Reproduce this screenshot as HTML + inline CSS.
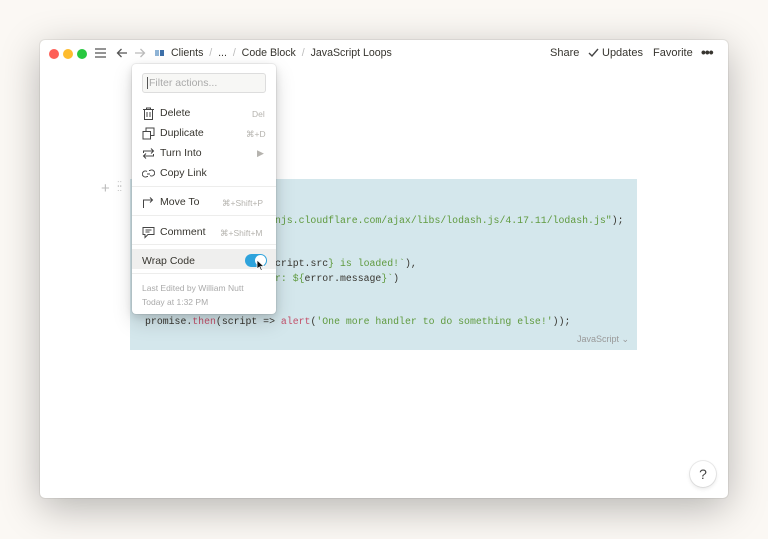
<!DOCTYPE html>
<html><head><meta charset="utf-8"><style>
*{margin:0;padding:0;box-sizing:border-box}
body{width:768px;height:539px;background:#fbf8f4;position:relative;overflow:hidden;font-family:"Liberation Sans",sans-serif;color:#37352f}
.win{position:absolute;left:40px;top:40px;width:688px;height:458px;background:#fff;border-radius:5px;box-shadow:0 10px 40px rgba(0,0,0,.28),0 0 0 1px rgba(0,0,0,.06)}
.dot{position:absolute;top:49px;width:10px;height:10px;border-radius:50%}
.t{position:absolute;font-size:11px;white-space:nowrap}
.code{position:absolute;left:130px;top:179px;width:507px;height:171px;background:#d4e7ec}
.code pre{position:absolute;left:15px;top:35px;font-family:"Liberation Mono",monospace;font-size:9.85px;line-height:14.4px;color:#37352f}
.s{color:#5f9a3e}.k{color:#c3506a}.p{color:#777}
.menu{position:absolute;left:132px;top:64px;width:144px;height:250px;background:#fff;border-radius:4px;box-shadow:0 0 0 1px rgba(15,15,15,.06),0 3px 8px rgba(15,15,15,.12),0 8px 20px rgba(15,15,15,.15)}
.menu .t{font-size:10.5px}
.sc{color:#b5b3ae;font-size:8.5px!important}
.sep{position:absolute;left:0;width:144px;height:1px;background:#ededec}
.ic{position:absolute;left:10px;width:13px;height:13px}
</style></head><body>
<div class="win"></div>
<div class="dot" style="left:49px;background:#fe5f57"></div>
<div class="dot" style="left:63px;background:#febc2e"></div>
<div class="dot" style="left:77px;background:#28c840"></div>
<svg style="position:absolute;left:94px;top:47px" width="13" height="12"><path d="M1 2h11M1 6h11M1 10h11" stroke="#555" stroke-width="1.3"/></svg>
<svg style="position:absolute;left:116px;top:47px" width="12" height="12"><path d="M11 6H1.5M5.5 2L1.5 6l4 4" stroke="#555" stroke-width="1.3" fill="none"/></svg>
<svg style="position:absolute;left:134px;top:47px" width="12" height="12"><path d="M1 6h9.5M6.5 2l4 4-4 4" stroke="#bbb" stroke-width="1.3" fill="none"/></svg>
<div style="position:absolute;left:155px;top:50px;width:4px;height:6px;background:#8fb4d6"></div>
<div style="position:absolute;left:160px;top:50px;width:4px;height:6px;background:#3d6fa8"></div>
<div class="t" style="left:171px;top:47px;font-size:10.6px">Clients <span style="color:#bbb">&nbsp;/&nbsp;</span> ... <span style="color:#bbb">&nbsp;/&nbsp;</span> Code Block <span style="color:#bbb">&nbsp;/&nbsp;</span> JavaScript Loops</div>
<div class="t" style="left:550px;top:47px">Share</div>
<svg style="position:absolute;left:588px;top:48px" width="11" height="10"><path d="M1 5l3 3 6-7" stroke="#444" stroke-width="1.4" fill="none"/></svg>
<div class="t" style="left:602px;top:47px">Updates</div>
<div class="t" style="left:653px;top:47px">Favorite</div>
<div class="t" style="left:701px;top:44px;font-size:14px;font-weight:bold;letter-spacing:-1px">•••</div>
<div class="t" style="left:101px;top:180px;color:#bbb;font-size:15px">+</div>
<div class="t" style="left:117px;top:183px;color:#bbb;font-size:8px;line-height:4px">⁚⁚<br>⁚⁚</div>
<div class="code"><pre>loadScript(<span class="s">"https://cdnjs.cloudflare.com/ajax/libs/lodash.js/4.17.11/lodash.js"</span>);

promise.<span class="k">then</span>(
  script => <span class="k">alert</span>(<span class="s">`${</span>script.src<span class="s">} is loaded!`</span>),
  error => <span class="k">alert</span>(<span class="s">`Error: ${</span>error.message<span class="s">}`</span>)
);

promise.<span class="k">then</span>(script => <span class="k">alert</span>(<span class="s">'One more handler to do something else!'</span>));</pre>
<div class="t" style="left:447px;top:155px;font-size:9px;color:#999">JavaScript ⌄</div>
</div>
<div class="menu">
<div style="position:absolute;left:10px;top:9px;width:124px;height:20px;border:1px solid #ddd;background:#f7f7f5;border-radius:3px"></div>
<div style="position:absolute;left:15px;top:13px;width:1px;height:12px;background:#555"></div>
<div class="t" style="left:17px;top:13px;color:#aaa">Filter actions...</div>
<svg class="ic" style="top:43px" viewBox="0 0 13 13"><path d="M1 2.5h11M4.5 2.5V1h4v1.5M2.5 2.5v10h8v-10M5 5v5M8 5v5" stroke="#444" fill="none"/></svg>
<div class="t" style="left:28px;top:43px">Delete</div><div class="t sc" style="left:120px;top:45px">Del</div>
<svg class="ic" style="top:63px" viewBox="0 0 13 13"><path d="M1 4.5h7.5V12H1zM4 4.5V1h8v7.5H8.5" stroke="#444" fill="none"/></svg>
<div class="t" style="left:28px;top:63px">Duplicate</div><div class="t sc" style="left:114px;top:65px">⌘+D</div>
<svg class="ic" style="top:83px" viewBox="0 0 13 13"><path d="M1.5 6V4h10M9 1.5l2.5 2.5L9 6.5M11.5 7v2h-10M4 6.5L1.5 9 4 11.5" stroke="#444" fill="none"/></svg>
<div class="t" style="left:28px;top:83px">Turn Into</div><div class="t sc" style="left:125px;top:84px;font-size:9px!important">▶</div>
<svg class="ic" style="top:103px" viewBox="0 0 13 13"><path d="M5 4.5a3 3 0 1 0 0 5h1M8 8.5a3 3 0 1 0 0-5H7M5 7h3" stroke="#444" fill="none"/></svg>
<div class="t" style="left:28px;top:103px">Copy Link</div>
<div class="sep" style="top:122px"></div>
<svg class="ic" style="top:132px" viewBox="0 0 13 13"><path d="M1.5 12V4h9M8 1.5L10.5 4 8 6.5" stroke="#444" fill="none"/></svg>
<div class="t" style="left:28px;top:132px">Move To</div><div class="t sc" style="left:90px;top:134px">⌘+Shift+P</div>
<div class="sep" style="top:151px"></div>
<svg class="ic" style="top:162px" viewBox="0 0 13 13"><path d="M1 1.5h11v7H6l-3 3v-3H1zM3.5 4h6M3.5 6h4" stroke="#444" fill="none"/></svg>
<div class="t" style="left:28px;top:162px">Comment</div><div class="t sc" style="left:88px;top:164px">⌘+Shift+M</div>
<div class="sep" style="top:180px"></div>
<div style="position:absolute;left:0;top:185px;width:144px;height:20px;background:#efefee"></div>
<div class="t" style="left:10px;top:191px">Wrap Code</div>
<div style="position:absolute;left:113px;top:190px;width:22px;height:13px;border-radius:7px;background:#2ea3dc"></div>
<div style="position:absolute;left:123px;top:191px;width:11px;height:11px;border-radius:50%;background:#fff"></div>
<svg style="position:absolute;left:124px;top:195px" width="9" height="13"><path d="M1 1v9l2.3-2 1.6 3.5 1.4-.6-1.6-3.4H8z" fill="#111" stroke="#fff" stroke-width=".8"/></svg>
<div class="sep" style="top:209px"></div>
<div class="t" style="left:10px;top:219px;font-size:8.5px;color:#aaa">Last Edited by William Nutt</div>
<div class="t" style="left:10px;top:233px;font-size:8.5px;color:#aaa">Today at 1:32 PM</div>
</div>
<div style="position:absolute;left:690px;top:461px;width:26px;height:26px;border-radius:50%;background:#fff;box-shadow:0 0 0 1px rgba(0,0,0,.08),0 2px 4px rgba(0,0,0,.1);text-align:center;line-height:26px;font-size:14px;color:#444">?</div>
</body></html>
